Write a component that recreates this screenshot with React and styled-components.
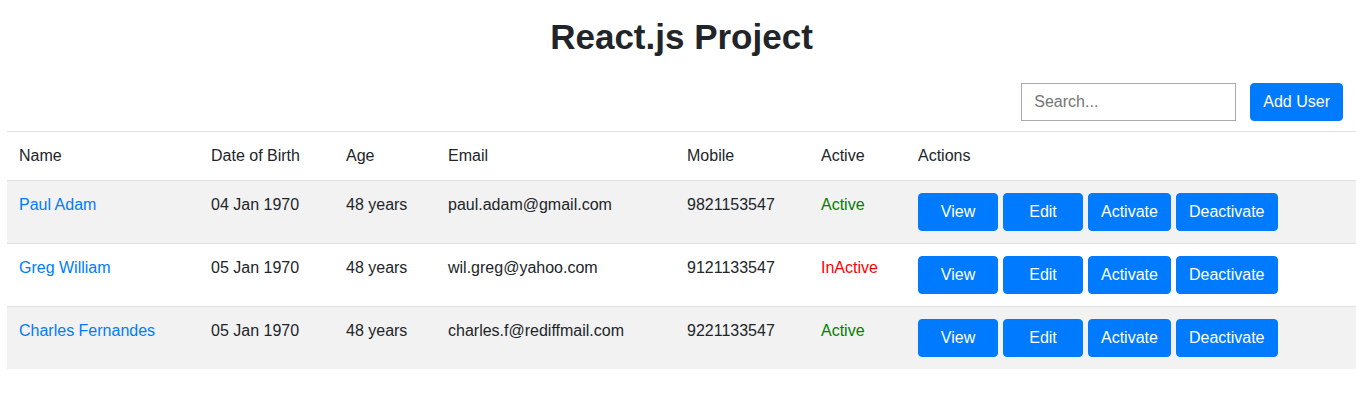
import React from 'react';
import styled, { createGlobalStyle } from 'styled-components';

const GlobalStyle = createGlobalStyle`
  body {
    margin: 0;
    font-family: "Liberation Sans", Arial, sans-serif;
    font-size: 16px;
    line-height: 1.5;
    color: #212529;
    background: #fff;
  }
`;

const Page = styled.div`
  padding: 0 0 0 7px;
`;

const Title = styled.h1`
  margin: 0;
  padding-top: 15px;
  height: 68px;
  box-sizing: border-box;
  text-align: center;
  font-size: 35px;
  font-weight: bold;
  line-height: 44px;
  color: #212529;
`;

const Toolbar = styled.div`
  display: flex;
  justify-content: flex-end;
  align-items: center;
  gap: 14px;
  padding: 15px 13px 10px 0;
`;

const SearchInput = styled.input`
  width: 215px;
  height: 38px;
  box-sizing: border-box;
  border: 1px solid #aaa;
  padding: 6px 12px;
  font-family: inherit;
  font-size: 16px;
  color: #212529;
  outline: none;
  &::placeholder {
    color: #757575;
  }
`;

const Button = styled.button`
  background: #007bff;
  color: #fff;
  border: 1px solid #007bff;
  border-radius: 4px;
  height: 38px;
  min-width: ${p => p.$min || 0}px;
  padding: 0 12px;
  font-family: inherit;
  font-size: 16px;
  line-height: 24px;
  white-space: nowrap;
  cursor: pointer;
`;

const Table = styled.table`
  width: 100%;
  border-collapse: collapse;
  table-layout: fixed;
`;

const Th = styled.th`
  box-sizing: border-box;
  text-align: left;
  font-weight: normal;
  padding: 12px;
  border-top: 1px solid #dee2e6;
  border-bottom: 1px solid #dee2e6;
  width: ${p => (p.$w ? `${p.$w}px` : 'auto')};
`;

const Tr = styled.tr`
  background: ${p => (p.$striped ? '#f2f2f2' : '#fff')};
  border-bottom: 1px solid #dee2e6;
  &:last-child {
    border-bottom: none;
  }
`;

const Td = styled.td`
  padding: 12px;
  vertical-align: top;
  color: ${p => p.$color || '#212529'};
`;

const Actions = styled.div`
  display: flex;
  gap: 5px;
`;

const columns = [
  ['Name', 192],
  ['Date of Birth', 135],
  ['Age', 102],
  ['Email', 239],
  ['Mobile', 134],
  ['Active', 97],
  ['Actions', null],
];

const users = [
  { name: 'Paul Adam', dob: '04 Jan 1970', age: '48 years', email: 'paul.adam@gmail.com', mobile: '9821153547', active: true },
  { name: 'Greg William', dob: '05 Jan 1970', age: '48 years', email: 'wil.greg@yahoo.com', mobile: '9121133547', active: false },
  { name: 'Charles Fernandes', dob: '05 Jan 1970', age: '48 years', email: 'charles.f@rediffmail.com', mobile: '9221133547', active: true },
];

export default function App() {
  return (
    <Page>
      <GlobalStyle />
      <Title>React.js Project</Title>
      <Toolbar>
        <SearchInput placeholder="Search..." />
        <Button>Add User</Button>
      </Toolbar>
      <Table>
        <thead>
          <tr>
            {columns.map(([label, w]) => (
              <Th key={label} $w={w}>{label}</Th>
            ))}
          </tr>
        </thead>
        <tbody>
          {users.map((u, i) => (
            <Tr key={u.name} $striped={i % 2 === 0}>
              <Td $color="#007bff">{u.name}</Td>
              <Td>{u.dob}</Td>
              <Td>{u.age}</Td>
              <Td>{u.email}</Td>
              <Td>{u.mobile}</Td>
              <Td $color={u.active ? '#008000' : '#ff0000'}>{u.active ? 'Active' : 'InActive'}</Td>
              <Td>
                <Actions>
                  <Button $min={80}>View</Button>
                  <Button $min={80}>Edit</Button>
                  <Button>Activate</Button>
                  <Button>Deactivate</Button>
                </Actions>
              </Td>
            </Tr>
          ))}
        </tbody>
      </Table>
    </Page>
  );
}
